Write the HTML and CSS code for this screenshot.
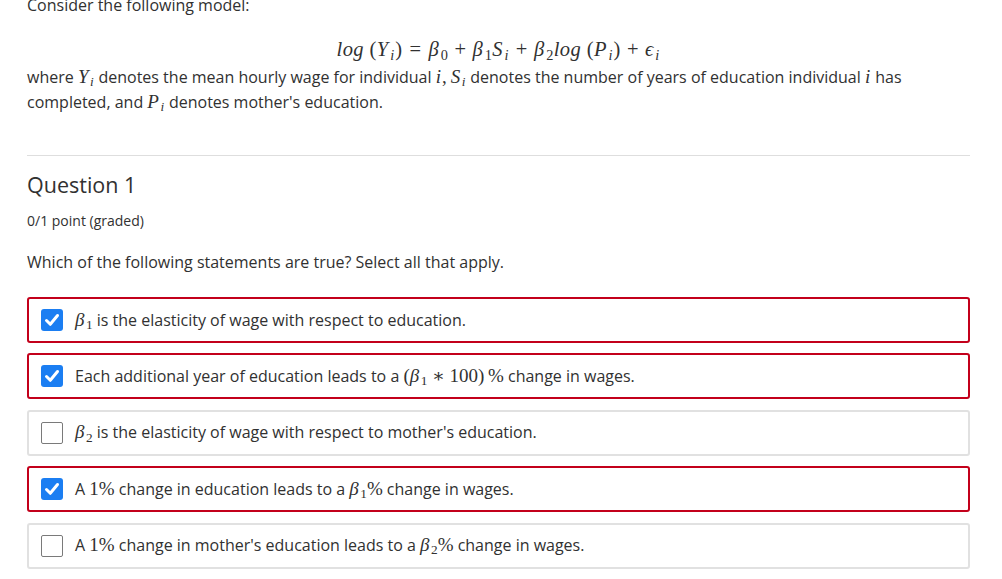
FILE: index.html
```html
<!DOCTYPE html>
<html lang="en">
<head>
<meta charset="utf-8">
<title>Question 1</title>
<link rel="stylesheet" href="styles.css">
</head>
<body>
<main class="page">
  <p class="para">Consider the following model:</p>
  <p class="display"><span class="m"><i>log</i>&thinsp;(<i>Y</i><sub><i>i</i></sub>)<span class="rel">=</span><i>β</i><sub>0</sub><span class="op">+</span><i>β</i><sub>1</sub><i>S</i><sub><i>i</i></sub><span class="op">+</span><i>β</i><sub>2</sub><i>log</i>&thinsp;(<i>P</i><sub><i>i</i></sub>)<span class="op">+</span><i>ϵ</i><sub><i>i</i></sub></span></p>
  <p class="para">where <span class="m"><i>Y</i><sub><i>i</i></sub></span> denotes the mean hourly wage for individual <span class="m"><i>i</i>,</span> <span class="m"><i>S</i><sub><i>i</i></sub></span> denotes the number of years of education individual <span class="m"><i>i</i></span> has completed, and <span class="m"><i>P</i><sub><i>i</i></sub></span> denotes mother's education.</p>

  <hr class="rule">

  <h3 class="q-title">Question 1</h3>
  <div class="q-points">0/1 point (graded)</div>
  <p class="q-prompt">Which of the following statements are true? Select all that apply.</p>

  <div class="choices">
    <label class="choice wrong">
      <span class="box checked"><svg viewBox="0 0 22 22" width="22" height="22"><path d="M5.5 11.5 L9.3 15.3 L16.5 6.5" fill="none" stroke="#fff" stroke-width="3" stroke-linecap="round" stroke-linejoin="round"/></svg></span>
      <span class="label"><span class="m"><i>β</i><sub>1</sub></span> is the elasticity of wage with respect to education.</span>
    </label>
    <label class="choice wrong">
      <span class="box checked"><svg viewBox="0 0 22 22" width="22" height="22"><path d="M5.5 11.5 L9.3 15.3 L16.5 6.5" fill="none" stroke="#fff" stroke-width="3" stroke-linecap="round" stroke-linejoin="round"/></svg></span>
      <span class="label">Each additional year of education leads to a <span class="m">(<i>β</i><sub>1</sub><span class="op">∗</span>100)&thinsp;%</span> change in wages.</span>
    </label>
    <label class="choice">
      <span class="box"></span>
      <span class="label"><span class="m"><i>β</i><sub>2</sub></span> is the elasticity of wage with respect to mother's education.</span>
    </label>
    <label class="choice wrong">
      <span class="box checked"><svg viewBox="0 0 22 22" width="22" height="22"><path d="M5.5 11.5 L9.3 15.3 L16.5 6.5" fill="none" stroke="#fff" stroke-width="3" stroke-linecap="round" stroke-linejoin="round"/></svg></span>
      <span class="label">A <span class="m">1%</span> change in education leads to a <span class="m"><i>β</i><sub>1</sub>%</span> change in wages.</span>
    </label>
    <label class="choice">
      <span class="box"></span>
      <span class="label">A <span class="m">1%</span> change in mother's education leads to a <span class="m"><i>β</i><sub>2</sub>%</span> change in wages.</span>
    </label>
  </div>
</main>
</body>
</html>
```

FILE: styles.css
```css
html, body {
  margin: 0;
  padding: 0;
  background: #fff;
}

body {
  font-family: "Open Sans", "Noto Sans", sans-serif;
  color: #313131;
  font-size: 16px;
}

.page {
  width: 943px;
  margin: -7px 0 0 27px;
}

.para {
  margin: 0;
  line-height: 25px;
}

.display {
  margin: 20px 0 2px;
  line-height: 25px;
  text-align: center;
}

.display .m {
  font-size: 20.5px;
  letter-spacing: 0.02em;
}

.display .m .rel {
  margin: 0 0.34em;
}

.display .m .op {
  margin: 0 0.3em;
}

.m {
  font-family: "Liberation Serif", "DejaVu Serif", serif;
  font-size: 19px;
  line-height: 1;
  white-space: nowrap;
}

.m i {
  font-style: italic;
  margin-right: 0.05em;
}

.m sub {
  font-size: 0.7em;
  vertical-align: -0.25em;
  line-height: 0;
  margin-left: 0.04em;
}

.m .rel {
  margin: 0 0.3em;
}

.m .op {
  margin: 0 0.24em;
}

.rule {
  margin: 40px 0 0;
  border: 0;
  border-top: 1px solid #dedede;
  height: 0;
}

.q-title {
  margin: 15px 0 0;
  font-size: 21.5px;
  font-weight: 400;
  line-height: 28px;
}

.q-points {
  margin-top: 12px;
  font-size: 14px;
  line-height: 20px;
}

.q-prompt {
  margin: 19px 0 0;
  line-height: 25px;
}

.choices {
  margin-top: 22px;
  display: flex;
  flex-direction: column;
  gap: 10.4px;
}

.choice {
  box-sizing: border-box;
  height: 46px;
  border: 2px solid #e1e1e1;
  border-radius: 3px;
  display: flex;
  align-items: center;
  padding: 0 12px;
  gap: 12px;
}

.choice.wrong {
  border-color: #c3001b;
}

.box {
  box-sizing: border-box;
  width: 22px;
  height: 22px;
  flex: none;
  border: 1px solid #7a7a7a;
  border-radius: 2px;
  background: #fff;
  display: flex;
}

.box.checked {
  border: 0;
  border-radius: 3px;
  background: #1b7ef2;
}

.label {
  line-height: 25px;
}
```
